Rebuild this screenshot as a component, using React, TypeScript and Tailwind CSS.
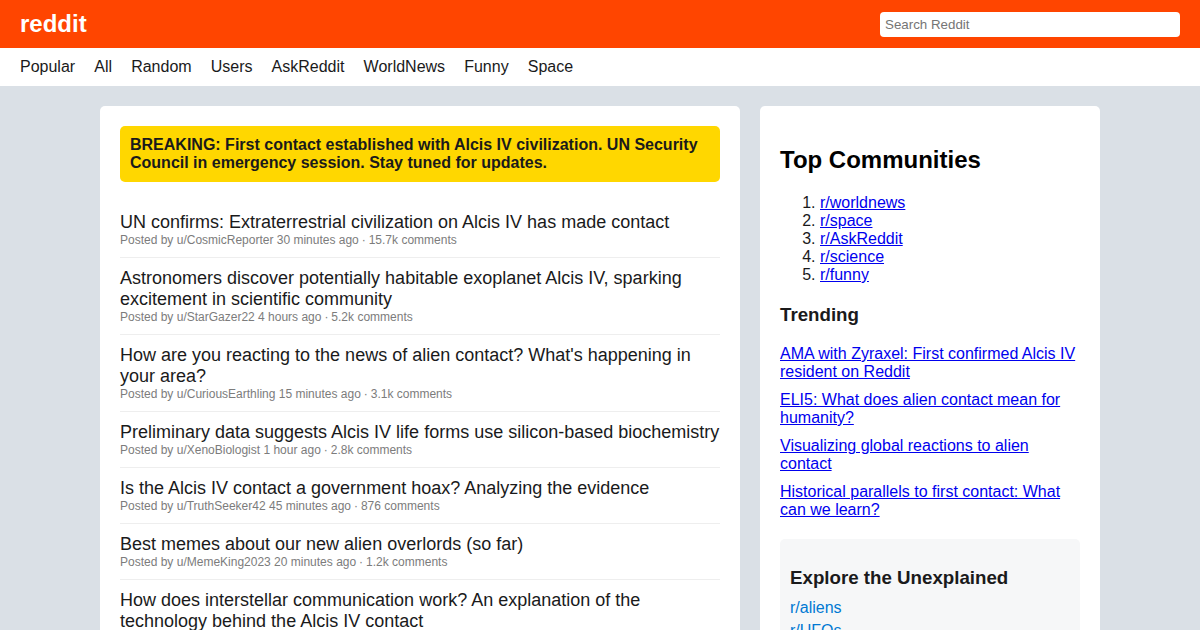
const navLinks = ["Popular", "All", "Random", "Users", "AskReddit", "WorldNews", "Funny", "Space"];

const posts = [
  { title: "UN confirms: Extraterrestrial civilization on Alcis IV has made contact", by: "Posted by u/CosmicReporter 30 minutes ago", comments: "15.7k comments" },
  { title: "Astronomers discover potentially habitable exoplanet Alcis IV, sparking excitement in scientific community", by: "Posted by u/StarGazer22 4 hours ago", comments: "5.2k comments" },
  { title: "How are you reacting to the news of alien contact? What's happening in your area?", by: "Posted by u/CuriousEarthling 15 minutes ago", comments: "3.1k comments" },
  { title: "Preliminary data suggests Alcis IV life forms use silicon-based biochemistry", by: "Posted by u/XenoBiologist 1 hour ago", comments: "2.8k comments" },
  { title: "Is the Alcis IV contact a government hoax? Analyzing the evidence", by: "Posted by u/TruthSeeker42 45 minutes ago", comments: "876 comments" },
  { title: "Best memes about our new alien overlords (so far)", by: "Posted by u/MemeKing2023 20 minutes ago", comments: "1.2k comments" },
  { title: "How does interstellar communication work? An explanation of the technology behind the Alcis IV contact", by: "Posted by u/ScienceExplainer 2 hours ago", comments: "1.9k comments" },
];

const communities = ["r/worldnews", "r/space", "r/AskReddit", "r/science", "r/funny"];

const trending = [
  "AMA with Zyraxel: First confirmed Alcis IV resident on Reddit",
  "ELI5: What does alien contact mean for humanity?",
  "Visualizing global reactions to alien contact",
  "Historical parallels to first contact: What can we learn?",
];

export default function App() {
  return (
    <div className="h-[630px] overflow-hidden bg-[#dae0e6] font-['Liberation_Sans',Arial,sans-serif] text-base leading-[normal] text-[#1a1a1b]">
      <header className="flex h-12 items-center justify-between bg-[#ff4500] px-5">
        <div className="text-2xl leading-[normal] font-bold text-white">reddit</div>
        <input
          placeholder="Search Reddit"
          className="h-[25px] w-[300px] rounded-[4px] bg-white p-[5px] text-[13.33px] leading-[normal] text-black outline-none placeholder:text-[#757575]"
        />
      </header>

      <nav className="flex h-[38px] items-center gap-[19.1px] bg-white px-5">
        {navLinks.map((link) => (
          <a key={link} href="#" className="text-[#1a1a1b]">
            {link}
          </a>
        ))}
      </nav>

      <div className="mx-auto mt-5 flex w-[1000px] items-start gap-5">
        <main className="w-[640px] rounded-[5px] bg-white p-5">
          <div className="mb-5 rounded-[5px] bg-[#ffd700] p-2.5 font-bold">
            BREAKING: First contact established with Alcis IV civilization. UN Security Council in emergency session. Stay tuned for updates.
          </div>
          {posts.map((post) => (
            <div key={post.title} className="border-b border-[#eeeeee] py-2.5">
              <div className="text-lg leading-[21px]">{post.title}</div>
              <div className="text-xs leading-[14px] text-[#7c7c7c]">
                {post.by}
                <span className="mx-[-0.4px]"> · </span>
                {post.comments}
              </div>
            </div>
          ))}
        </main>

        <aside className="w-[340px] rounded-[5px] bg-white px-5 pt-[40px] pb-5">
          <h2 className="mb-[21px] text-2xl leading-[27px] font-bold text-black">Top Communities</h2>
          <ol className="mb-5 list-decimal pl-10">
            {communities.map((name) => (
              <li key={name}>
                <a href="#" className="text-[#0000ee] underline">
                  {name}
                </a>
              </li>
            ))}
          </ol>
          <h3 className="mb-5 text-[18.72px] leading-[21px] font-bold">Trending</h3>
          <div className="flex flex-col gap-2.5">
            {trending.map((item) => (
              <a key={item} href="#" className="text-[#0000ee] underline">
                {item}
              </a>
            ))}
          </div>
          <div className="mt-5 rounded-[5px] bg-[#f6f7f8] px-2.5 pt-[27.72px] pb-2.5">
            <h3 className="mb-[11px] text-[18.72px] leading-[21px] font-bold">Explore the Unexplained</h3>
            <div className="flex flex-col gap-[5px]">
              <a href="#" className="text-[#0079d3]">r/aliens</a>
              <a href="#" className="text-[#0079d3]">r/UFOs</a>
              <a href="#" className="text-[#0079d3]">r/space</a>
            </div>
          </div>
        </aside>
      </div>
    </div>
  );
}
